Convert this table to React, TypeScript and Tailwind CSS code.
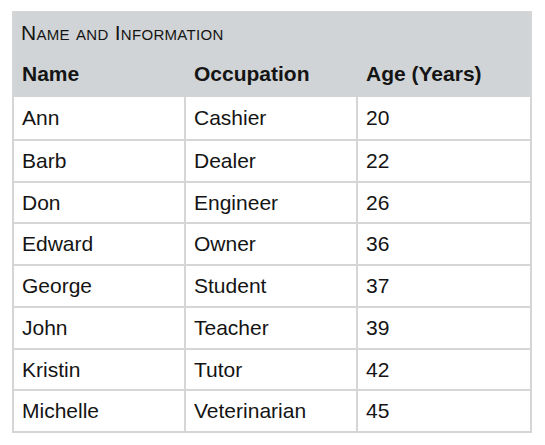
import React from 'react'

const rows = [
    ['Ann', 'Cashier', '20'],
    ['Barb', 'Dealer', '22'],
    ['Don', 'Engineer', '26'],
    ['Edward', 'Owner', '36'],
    ['George', 'Student', '37'],
    ['John', 'Teacher', '39'],
    ['Kristin', 'Tutor', '42'],
    ['Michelle', 'Veterinarian', '45'],
]

const App = () => {
    return (
        <main className='w-[545px] h-[445px] bg-white pt-[11px] pl-[12px] text-[#141414]' style={{ fontFamily: '"Liberation Sans", Arial, sans-serif' }}>
            <div className='w-[520px] border-2 border-[#d3d5d6]'>
                <div className='bg-[#d1d4d6]'>
                    <div className='h-[38px] flex items-center pl-[7px] text-[21px] tracking-[0.3px] [font-variant:small-caps] leading-none'>Name and Information</div>
                    <div className='grid grid-cols-3 h-[46px] text-[21px] font-bold'>
                        <div className='flex items-center pl-[8px] border-r-2 border-transparent'>Name</div>
                        <div className='flex items-center pl-[8px] border-r-2 border-transparent'>Occupation</div>
                        <div className='flex items-center pl-[8px]'>Age (Years)</div>
                    </div>
                </div>
                {rows.map((r, i) => (
                    <div key={i} className={'grid grid-cols-3 h-[41.75px] text-[21px] ' + (i > 0 ? 'border-t-2 border-[#d6d6d6]' : '')}>
                        <div className='flex items-center pl-[8px] border-r-2 border-[#d6d6d6]'>{r[0]}</div>
                        <div className='flex items-center pl-[8px] border-r-2 border-[#d6d6d6]'>{r[1]}</div>
                        <div className='flex items-center pl-[8px]'>{r[2]}</div>
                    </div>
                ))}
            </div>
        </main>
    )
}

export default App
